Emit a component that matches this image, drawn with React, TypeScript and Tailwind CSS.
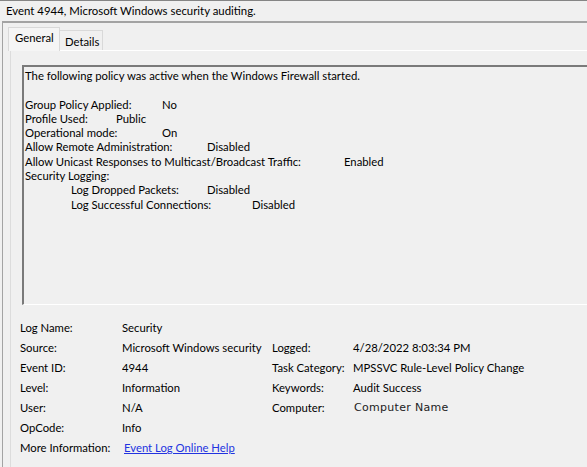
import React from 'react';

// lines of the policy text box: [indent, label, labelWidth, value]
const policyLines: { indent?: boolean; label: string; w: number; value: string }[] = [
  { label: 'Group Policy Applied:', w: 137, value: 'No' },
  { label: 'Profile Used:', w: 91, value: 'Public' },
  { label: 'Operational mode:', w: 137, value: 'On' },
  { label: 'Allow Remote Administration:', w: 182, value: 'Disabled' },
  { label: 'Allow Unicast Responses to Multicast/Broadcast Traffic:', w: 319, value: 'Enabled' },
  { label: 'Security Logging:', w: 0, value: '' },
  { indent: true, label: 'Log Dropped Packets:', w: 136, value: 'Disabled' },
  { indent: true, label: 'Log Successful Connections:', w: 181, value: 'Disabled' },
];

function Field({ label, children }: { label: string; children?: React.ReactNode }) {
  return (
    <>
      <div className="h-[20px] leading-[20px]">{label}</div>
      <div className="h-[20px] leading-[20px] w-[140px] overflow-hidden whitespace-nowrap">{children}</div>
    </>
  );
}

export default function App() {
  return (
    <div className="w-[587px] h-[467px] overflow-hidden bg-[#f0f0f0] border-t border-[#858585] text-[11.3px] text-black font-['Lato','Noto_Sans',sans-serif]">
      {/* title */}
      <div className="h-[20px] leading-[20px] pl-[6px] text-[11.4px]">Event 4944, Microsoft Windows security auditing.</div>

      <div className="ml-[2px] h-full border-l border-t-2 border-[#a3a3a3]">
        {/* tabs */}
        <div className="flex items-end h-[27px] pl-[5px]">
          <div className="h-[24px] w-[52px] px-[6px] leading-[20px] bg-[#f5f5f5] border border-b-0 border-[#d9d9d9] relative z-10 -mb-px">
            General
          </div>
          <div className="h-[20px] w-[43px] px-[5px] leading-[22px] bg-[#f0f0f0] border border-l-0 border-b-0 border-[#d9d9d9]">
            Details
          </div>
        </div>

        {/* tab panel */}
        <div className="ml-[7px] h-full border-t border-l border-[#dcdcdc] border-t-white bg-[#f0f0f0]">
          {/* message box */}
          <div className="ml-[11px] mt-[14px] h-[240px] border-t-2 border-l-2 border-[#7a7a7a] border-b border-b-white pl-[1px] pt-[2px] leading-[14.3px] whitespace-nowrap">
            <div>The following policy was active when the Windows Firewall started.</div>
            <div className="h-[14.3px]" />
            {policyLines.map(l => (
              <div key={l.label} className={`flex ${l.indent ? 'pl-[46px]' : ''}`}>
                <span style={{ width: l.w || undefined }} className="shrink-0">{l.label}</span>
                <span>{l.value}</span>
              </div>
            ))}
          </div>

          {/* details */}
          <div className="mt-[13px] ml-[9px] grid grid-cols-[102px_150px_81px_1fr]">
            <Field label="Log Name:">Security</Field>
            <div /><div />
            <Field label="Source:">Microsoft Windows security auditing.</Field>
            <div className="h-[20px] leading-[20px]">Logged:</div>
            <div className="h-[20px] leading-[20px]">4/28/2022 8:03:34 PM</div>
            <Field label="Event ID:">4944</Field>
            <div className="h-[20px] leading-[20px]">Task Category:</div>
            <div className="h-[20px] leading-[20px]">MPSSVC Rule-Level Policy Change</div>
            <Field label="Level:">Information</Field>
            <div className="h-[20px] leading-[20px]">Keywords:</div>
            <div className="h-[20px] leading-[20px]">Audit Success</div>
            <Field label="User:">N/A</Field>
            <div className="h-[20px] leading-[20px]">Computer:</div>
            <div className="h-[20px] leading-[20px] pl-[1px] font-['DejaVu_Sans',sans-serif] text-[11px] tracking-[0.3px] text-[#222]">Computer Name</div>
            <Field label="OpCode:">Info</Field>
            <div /><div />
            <div className="h-[19px] leading-[19px]">More Information:</div>
            <div className="h-[19px] leading-[19px] pl-[2px] col-span-3">
              <a className="text-[#2233e0] underline">Event Log Online Help</a>
            </div>
          </div>
        </div>
      </div>
    </div>
  );
}
